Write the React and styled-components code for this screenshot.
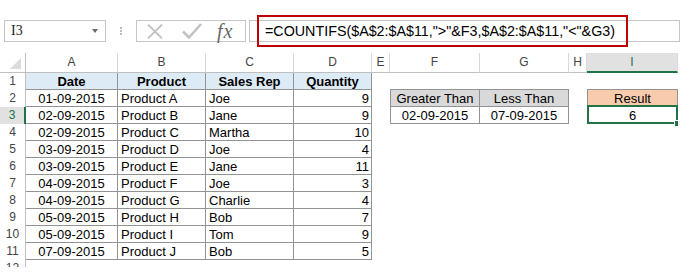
import React from 'react';
import styled, { createGlobalStyle, css } from 'styled-components';

const GlobalStyle = createGlobalStyle`
  html, body { margin: 0; padding: 0; background: #ffffff; }
  body { font-family: "Liberation Sans", Arial, sans-serif; }
`;

const COL_TEMPLATE = '26px 92px 88px 88px 78px 18px 90px 89px 18px 91px';
const GREEN = '#217346';
const LINE = '#939393';

const Page = styled.div`
  width: 687px;
  height: 278px;
  background: #fff;
  overflow: hidden;
  font-family: "Liberation Sans", Arial, sans-serif;
`;

const TopBar = styled.div`
  display: flex;
  align-items: center;
  height: 22px;
  padding: 20px 0 11px 4px;
`;

const NameBox = styled.div`
  box-sizing: border-box;
  width: 102px;
  height: 22px;
  border: 1px solid #c6c6c6;
  display: flex;
  align-items: center;
  justify-content: space-between;
  padding: 0 7px 0 6px;
  font-family: "Liberation Serif", "Times New Roman", serif;
  font-size: 14px;
  color: #222;
`;

const Caret = styled.span`
  width: 0;
  height: 0;
  border-left: 3.5px solid transparent;
  border-right: 3.5px solid transparent;
  border-top: 4px solid #6b6b6b;
`;

const Grip = styled.div`
  display: flex;
  flex-direction: column;
  gap: 1px;
  margin: 0 14px;
`;

const GripDot = styled.span`
  width: 2px;
  height: 2px;
  background: #bdbdbd;
`;

const FnBox = styled.div`
  box-sizing: border-box;
  width: 110px;
  height: 22px;
  border: 1px solid #c6c6c6;
  display: flex;
  align-items: center;
  padding-left: 10px;
`;

const IconSlot = styled.span`
  display: flex;
  margin-left: ${p => p.$gap || 0}px;
`;

const Fx = styled.span`
  margin-left: 15px;
  font-family: "Liberation Serif", "Times New Roman", serif;
  font-style: italic;
  font-size: 20px;
  letter-spacing: 1px;
  color: #666;
  line-height: 20px;
`;

const FormulaField = styled.div`
  box-sizing: border-box;
  margin-left: 3px;
  width: 431px;
  height: 22px;
  border: 1px solid #c6c6c6;
  display: flex;
  align-items: center;
`;

const Highlight = styled.div`
  box-sizing: border-box;
  flex-shrink: 0;
  margin-left: 7px;
  width: 371px;
  height: 32px;
  border: 2px solid #c00000;
  display: flex;
  align-items: center;
  padding-left: 6px;
  font-size: 14.3px;
  color: #000;
  white-space: nowrap;
`;

const Sheet = styled.div`
  width: 678px;
  height: 214px;
  overflow: hidden;
  display: flex;
  flex-direction: column;
`;

const HeaderRow = styled.div`
  display: grid;
  grid-template-columns: ${COL_TEMPLATE};
  height: 20px;
  flex-shrink: 0;
`;

const Row = styled.div`
  display: grid;
  grid-template-columns: ${COL_TEMPLATE};
  height: 17px;
  flex-shrink: 0;
`;

const Corner = styled.div`
  box-sizing: border-box;
  border-right: 1px solid #bfbfbf;
  border-bottom: 1px solid #bfbfbf;
  display: flex;
  justify-content: flex-end;
  align-items: flex-end;
  padding: 0 4px 3px 0;
  &::after {
    content: '';
    width: 0;
    height: 0;
    border-left: 11px solid transparent;
    border-bottom: 11px solid #dcdcdc;
  }
`;

const ColHeader = styled.div`
  box-sizing: border-box;
  height: 20px;
  border-right: 1px solid #d9d9d9;
  border-bottom: 1px solid #bfbfbf;
  text-align: center;
  font-size: 12px;
  line-height: 19px;
  color: #444;
  ${p => p.$active && css`
    background: #e1e1e1;
    border-bottom: 2px solid ${GREEN};
    color: ${GREEN};
  `}
`;

const RowHeader = styled.div`
  box-sizing: border-box;
  height: 17px;
  border-right: 1px solid #bfbfbf;
  text-align: center;
  font-size: 12px;
  line-height: 17px;
  color: #444;
  ${p => p.$active && css`
    background: #e1e1e1;
    border-right: 2px solid ${GREEN};
    color: ${GREEN};
  `}
`;

const Cell = styled.div`
  position: relative;
  box-sizing: border-box;
  height: 17px;
  font-size: 13px;
  line-height: 17px;
  color: #000;
  white-space: nowrap;
  text-align: ${p => p.$align || 'left'};
  padding: ${p => (p.$align === 'right' ? '0 2px 0 0' : p.$align === 'center' ? '0' : '0 0 0 3px')};
  font-weight: ${p => (p.$bold ? 700 : 400)};
  background: ${p => p.$bg || 'transparent'};
  ${p => p.$grid && css`
    border-right: 1px solid ${LINE};
    border-bottom: 1px solid ${LINE};
  `}
  ${p => p.$left && css`
    border-left: 1px solid ${LINE};
  `}
  ${p => p.$top && css`
    box-shadow: 0 -1px 0 0 ${LINE};
  `}
`;

const Selection = styled.span`
  position: absolute;
  top: -2px;
  left: -1px;
  right: -1px;
  bottom: -1px;
  border: 2px solid ${GREEN};
  pointer-events: none;
`;

const Handle = styled.span`
  position: absolute;
  right: -4px;
  bottom: -4px;
  width: 5px;
  height: 5px;
  background: ${GREEN};
  border: 1px solid #fff;
`;

const data = [
  ['01-09-2015', 'Product A', 'Joe', 9],
  ['02-09-2015', 'Product B', 'Jane', 9],
  ['02-09-2015', 'Product C', 'Martha', 10],
  ['03-09-2015', 'Product D', 'Joe', 4],
  ['03-09-2015', 'Product E', 'Jane', 11],
  ['04-09-2015', 'Product F', 'Joe', 3],
  ['04-09-2015', 'Product G', 'Charlie', 4],
  ['05-09-2015', 'Product H', 'Bob', 7],
  ['05-09-2015', 'Product I', 'Tom', 9],
  ['07-09-2015', 'Product J', 'Bob', 5],
];

const columns = ['A', 'B', 'C', 'D', 'E', 'F', 'G', 'H', 'I'];
const BLUE = '#ddebf7';
const GRAY = '#d9d9d9';
const PEACH = '#f8cbad';

function CrossIcon() {
  return (
    <svg width="16" height="15" viewBox="0 0 16 15">
      <path d="M1 0.5 L15 14.5 M15 0.5 L1 14.5" stroke="#c2c2c2" strokeWidth="1.8" fill="none" />
    </svg>
  );
}

function CheckIcon() {
  return (
    <svg width="20" height="16" viewBox="0 0 20 16">
      <path d="M1 8.5 L7 14.5 L19 1" stroke="#c2c2c2" strokeWidth="2.6" fill="none" />
    </svg>
  );
}

function SheetRow({ r }) {
  const cells = [];
  if (r === 1) {
    ['Date', 'Product', 'Sales Rep', 'Quantity'].forEach(h =>
      cells.push(<Cell key={h} $align="center" $bold $bg={BLUE} $grid>{h}</Cell>)
    );
  } else if (r <= 11) {
    const [d, p, s, q] = data[r - 2];
    cells.push(<Cell key="a" $align="center" $grid>{d}</Cell>);
    cells.push(<Cell key="b" $grid>{p}</Cell>);
    cells.push(<Cell key="c" $grid>{s}</Cell>);
    cells.push(<Cell key="d" $align="right" $grid>{q}</Cell>);
  } else {
    ['a', 'b', 'c', 'd'].forEach(k => cells.push(<Cell key={k} />));
  }
  cells.push(<Cell key="e" />);
  if (r === 2) {
    cells.push(<Cell key="f" $align="center" $bg={GRAY} $grid $left $top>Greater Than</Cell>);
    cells.push(<Cell key="g" $align="center" $bg={GRAY} $grid $top>Less Than</Cell>);
  } else if (r === 3) {
    cells.push(<Cell key="f" $align="center" $grid $left>02-09-2015</Cell>);
    cells.push(<Cell key="g" $align="center" $grid>07-09-2015</Cell>);
  } else {
    cells.push(<Cell key="f" />);
    cells.push(<Cell key="g" />);
  }
  cells.push(<Cell key="h" />);
  if (r === 2) {
    cells.push(<Cell key="i" $align="center" $bg={PEACH} $grid $left $top>Result</Cell>);
  } else if (r === 3) {
    cells.push(
      <Cell key="i" $align="center" $grid $left>
        6
        <Selection />
        <Handle />
      </Cell>
    );
  } else {
    cells.push(<Cell key="i" />);
  }
  return (
    <Row>
      <RowHeader $active={r === 3}>{r}</RowHeader>
      {cells}
    </Row>
  );
}

export default function App() {
  return (
    <Page>
      <GlobalStyle />
      <TopBar>
        <NameBox>
          <span>I3</span>
          <Caret />
        </NameBox>
        <Grip>
          <GripDot />
          <GripDot />
          <GripDot />
        </Grip>
        <FnBox>
          <IconSlot><CrossIcon /></IconSlot>
          <IconSlot $gap={19}><CheckIcon /></IconSlot>
          <Fx>fx</Fx>
        </FnBox>
        <FormulaField>
          <Highlight>=COUNTIFS($A$2:$A$11,"&gt;"&amp;F3,$A$2:$A$11,"&lt;"&amp;G3)</Highlight>
        </FormulaField>
      </TopBar>
      <Sheet>
        <HeaderRow>
          <Corner />
          {columns.map(c => (
            <ColHeader key={c} $active={c === 'I'}>{c}</ColHeader>
          ))}
        </HeaderRow>
        {Array.from({ length: 12 }, (_, i) => (
          <SheetRow key={i} r={i + 1} />
        ))}
      </Sheet>
    </Page>
  );
}
